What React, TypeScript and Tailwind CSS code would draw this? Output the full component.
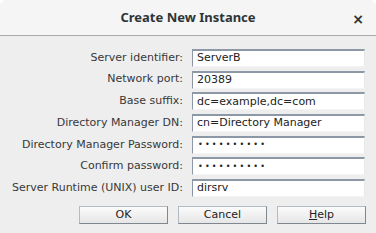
import React from "react";

const rows: { label: string; value: string; secret?: boolean }[] = [
  { label: "Server identifier:", value: "ServerB" },
  { label: "Network port:", value: "20389" },
  { label: "Base suffix:", value: "dc=example,dc=com" },
  { label: "Directory Manager DN:", value: "cn=Directory Manager" },
  { label: "Directory Manager Password:", value: "••••••••••", secret: true },
  { label: "Confirm password:", value: "••••••••••", secret: true },
  { label: "Server Runtime (UNIX) user ID:", value: "dirsrv" },
];

function Button({ children }: { children: React.ReactNode }) {
  return (
    <div className="w-[89px] h-[18px] flex items-center justify-center bg-gradient-to-b from-[#fbfbfb] to-[#e6e6e6] border border-[#b4bac1] border-r-[#7f8791] border-b-[#7f8791] text-[11px] text-[#222]">
      {children}
    </div>
  );
}

export default function App() {
  return (
    <div
      className="w-[376px] h-[233px] bg-[#eeeeee] flex flex-col overflow-hidden rounded-t-[7px]"
      style={{ fontFamily: '"DejaVu Sans", sans-serif' }}
    >
      <div className="h-[36px] shrink-0 bg-[#f5f5f5] border-b border-[#a9a9a9] relative flex items-center justify-center">
        <span className="text-[13px] font-bold text-[#2e3436]" style={{ fontFamily: '"Noto Sans", sans-serif' }}>
          Create New Instance
        </span>
        <span className="absolute right-[12px] top-[9px] text-[14px] font-bold text-[#2e3436]">×</span>
      </div>

      <div className="flex flex-col gap-[3.7px] pt-[13px] pr-[11px]">
        {rows.map((r) => (
          <div key={r.label} className="flex items-center h-[18px]">
            <div className="w-[183px] text-right text-[11px] text-[#383838] whitespace-nowrap">{r.label}</div>
            <div className="ml-[9px] flex-1 h-[18px] bg-white border-t-2 border-l border-[#8d98a6] border-r border-r-[#e8e8e8] border-b border-b-[#f4f4f4] flex items-center pl-[4px] text-[11px] text-[#222] whitespace-nowrap">
              {r.secret ? (
                <span className="tracking-[2.2px] text-[8px] pl-[1px]">{r.value}</span>
              ) : (
                r.value
              )}
            </div>
          </div>
        ))}
      </div>

      <div className="flex justify-end gap-[10px] pr-[10px] mt-[9px]">
        <Button>OK</Button>
        <Button>Cancel</Button>
        <Button>
          <span>
            <span className="underline">H</span>elp
          </span>
        </Button>
      </div>
    </div>
  );
}
